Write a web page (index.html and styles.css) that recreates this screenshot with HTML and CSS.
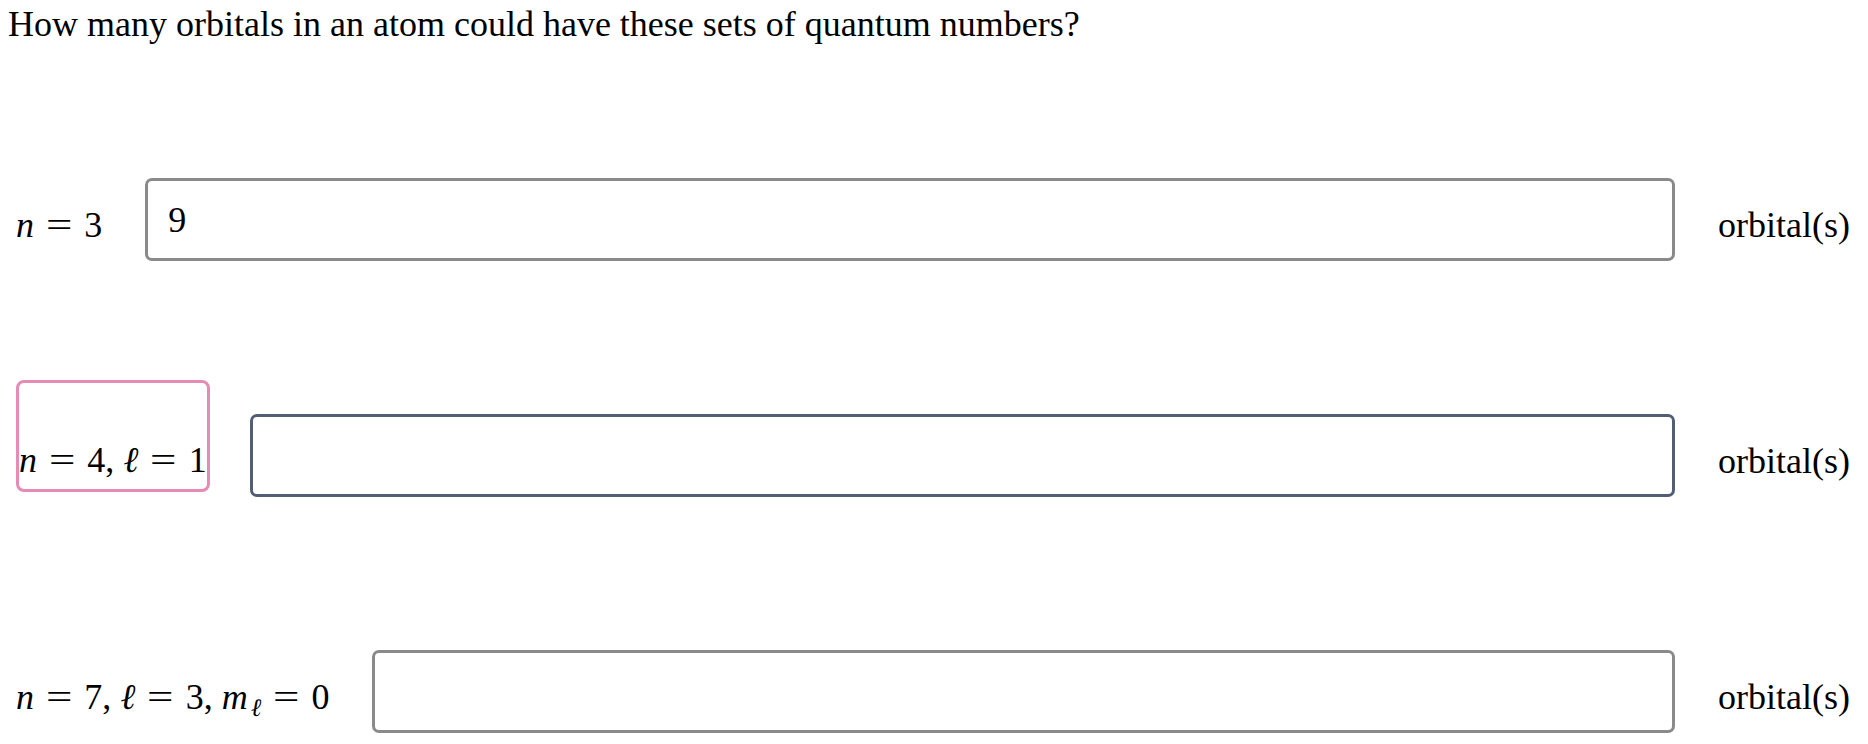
FILE: index.html
```html
<!DOCTYPE html>
<html lang="en">
<head>
    <meta charset="UTF-8">
    <title>Quantum Numbers</title>
    <link rel="stylesheet" href="styles.css">
</head>

<body>
    <div class="question">How many orbitals in an atom could have these sets of quantum numbers?</div>

    <div class="rows">
        <div class="row">
            <span class="label"><i>n</i><span class="eq">=</span>3</span>
            <input class="answer" type="text" value="9">
            <span class="unit">orbital(s)</span>
        </div>

        <div class="row">
            <span class="label label-focus"><i>n</i><span class="eq">=</span>4<span class="comma">,</span><i>ℓ</i><span class="eq">=</span>1</span>
            <input class="answer answer-active" type="text">
            <span class="unit">orbital(s)</span>
        </div>

        <div class="row">
            <span class="label"><i>n</i><span class="eq">=</span>7<span class="comma">,</span><i>ℓ</i><span class="eq">=</span>3<span class="comma">,</span><i>m</i><sub><i>ℓ</i></sub><span class="eq">=</span>0</span>
            <input class="answer" type="text">
            <span class="unit">orbital(s)</span>
        </div>
    </div>
</body>
</html>
```

FILE: styles.css
```css
body {
    margin: 0;
    padding: 3px 8px 0;
    font-family: 'Liberation Serif', 'Times New Roman', serif;
    font-size: 36px;
    color: #000;
    background: #fff;
}

.question {
    line-height: normal;
}

.rows {
    display: flex;
    flex-direction: column;
    gap: 153px;
    margin-top: 133px;
    padding: 0 10px 0 8px;
}

.row {
    display: flex;
    align-items: center;
    height: 83px;
}

.label {
    white-space: nowrap;
    padding-top: 10px;
    margin-right: 43px;
}

.label i {
    font-style: italic;
}

.eq {
    display: inline-block;
    margin: 0 15px;
    transform: scaleX(1.3);
}

.comma {
    margin-right: 9px;
}

.label sub {
    font-size: 0.7em;
    vertical-align: -0.3em;
    line-height: 0;
    margin-left: 3px;
}

.label-focus {
    padding: 56px 0 8px;
    margin: 0 43px 39px 3px;
    outline: 3px solid #e68bb5;
    border-radius: 5px;
    line-height: normal;
}

.answer {
    flex: 1;
    min-width: 0;
    box-sizing: border-box;
    height: 83px;
    padding: 0 20px;
    border: 3px solid #8a8a8a;
    border-radius: 7px;
    font-family: 'Liberation Serif', 'Times New Roman', serif;
    font-size: 36px;
    color: #000;
    background: #fff;
    outline: none;
}

.answer-active {
    border-color: #525e73;
}

.unit {
    white-space: nowrap;
    padding-top: 10px;
    margin-left: 43px;
}
```
